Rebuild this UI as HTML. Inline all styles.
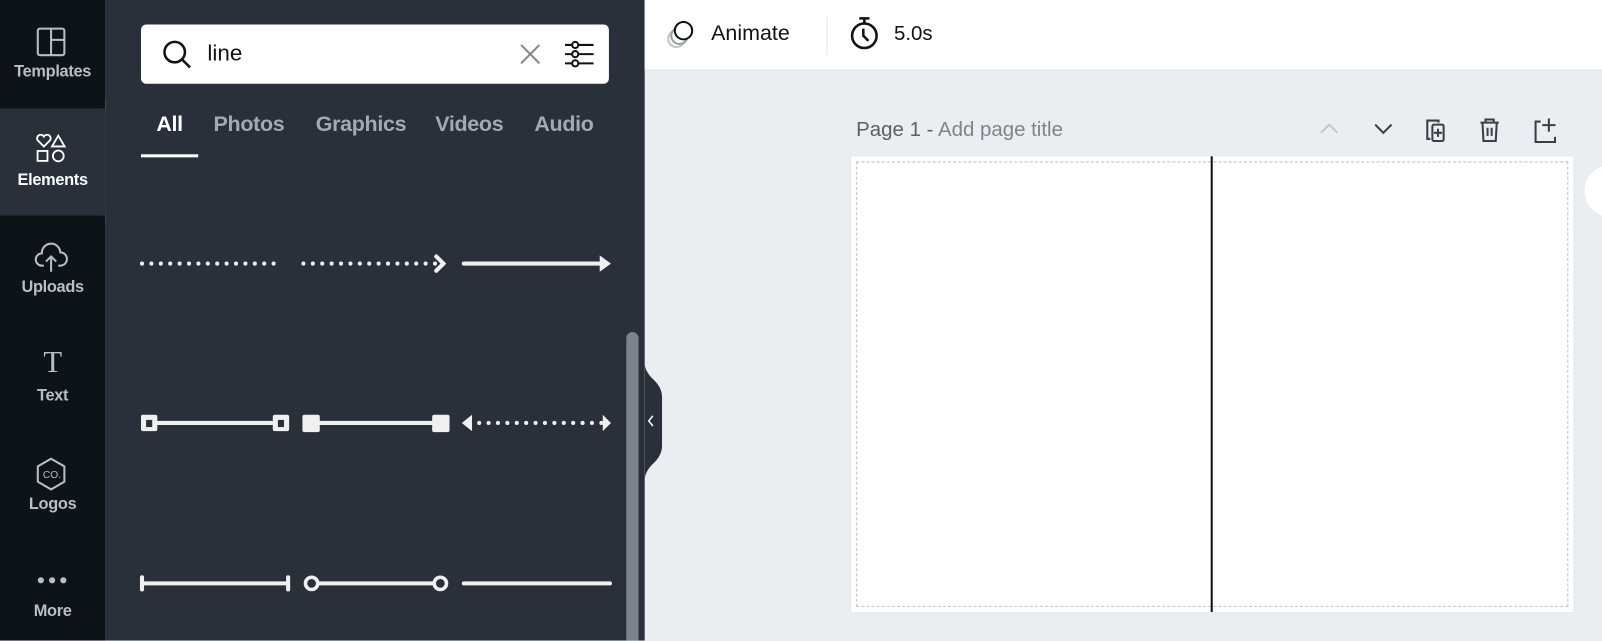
<!DOCTYPE html>
<html><head><meta charset="utf-8"><style>
*{margin:0;padding:0;box-sizing:border-box}
html,body{width:1602px;height:641px;overflow:hidden;background:#ebeef1;font-family:"Liberation Sans",sans-serif}
#w{position:absolute;left:0;top:0;width:1568px;height:627px;overflow:hidden;transform:scale(1.02168);transform-origin:0 0;background:#ebeef1}
.a{position:absolute}
.side{left:0;top:0;width:103px;height:627px;background:#0e1318}
.item{position:absolute;left:0;width:103px;text-align:center;color:#b9bec6;font-size:16px;font-weight:bold;letter-spacing:-0.3px}
.panel{left:103px;top:0;width:528px;height:627px;background:#293039}
.tab{position:absolute;top:110px;font-size:21px;font-weight:bold;color:#a4a9b1;letter-spacing:-0.3px}
</style></head><body><div id="w">
<div class="a side"></div>
<div class="a panel"></div>
<div class="a" style="left:0;top:106px;width:103px;height:105px;background:#293039"></div>
<div class="a" style="left:0;top:0;width:103px;height:106px;background:#0e1318;border-bottom-right-radius:10px"></div>
<div class="a" style="left:0;top:211px;width:103px;height:416px;background:#0e1318;border-top-right-radius:10px"></div>

<svg class="a" style="left:35px;top:26px" width="30" height="30" viewBox="0 0 30 30" fill="none" stroke="#b9bec6" stroke-width="2"><rect x="2" y="2" width="26" height="26" rx="2"/><path d="M15 2v26M15 13h13"/></svg>
<div class="item" style="top:62px">Templates</div>
<svg class="a" style="left:34px;top:131px" width="32" height="30" viewBox="0 0 36 34" fill="none" stroke="#fff" stroke-width="2"><path d="M10 14 L3 7 A3.5 3.5 0 0 1 10 3 A3.5 3.5 0 0 1 17 7Z"/><path d="M26 2 L33 14 H19Z"/><rect x="3" y="19" width="11" height="11"/><circle cx="26" cy="24.5" r="6"/></svg>
<div class="item" style="top:168px;color:#fff">Elements</div>
<svg class="a" style="left:33px;top:236px" width="34" height="32" viewBox="0 0 34 32" fill="none" stroke="#b9bec6" stroke-width="2"><path d="M10 24 H8 A6 6 0 0 1 8 12 A9 9 0 0 1 26 11 A6.5 6.5 0 0 1 26 24 H24"/><path d="M17 30V16M12 20l5-5 5 5"/></svg>
<div class="item" style="top:273px">Uploads</div>
<div class="item" style="top:338px;font-size:30px;font-weight:normal;font-family:'Liberation Serif',serif">T</div>
<div class="item" style="top:379px">Text</div>
<svg class="a" style="left:34px;top:447px" width="32" height="34" viewBox="0 0 32 34" fill="none" stroke="#b9bec6" stroke-width="2"><path d="M16 2 L29 9.5 V24.5 L16 32 L3 24.5 V9.5Z"/><text x="8" y="21" font-size="10" fill="#b9bec6" stroke="none" font-family="Liberation Sans">CO.</text></svg>
<div class="item" style="top:485px">Logos</div>
<svg class="a" style="left:36px;top:564px" width="30" height="8" viewBox="0 0 30 8" fill="#b9bec6"><circle cx="4" cy="4" r="3"/><circle cx="15" cy="4" r="3"/><circle cx="26" cy="4" r="3"/></svg>
<div class="item" style="top:590px">More</div>

<div class="a" style="left:138px;top:24px;width:458px;height:58px;background:#fff;border-radius:5px"></div>
<svg class="a" style="left:158px;top:38px" width="32" height="32" viewBox="0 0 32 32" fill="none" stroke="#0e1318" stroke-width="2.5"><circle cx="13" cy="13" r="10"/><path d="M20.5 20.5 L28 28"/></svg>
<div class="a" style="left:203px;top:39px;font-size:22px;color:#0e1318">line</div>
<svg class="a" style="left:508px;top:42px" width="22" height="22" viewBox="0 0 22 22" stroke="#888" stroke-width="2"><path d="M2 2L20 20M20 2L2 20"/></svg>
<svg class="a" style="left:551px;top:38px" width="32" height="32" viewBox="0 0 32 32" fill="#fff" stroke="#0e1318" stroke-width="2"><path d="M2 6h28M2 15h28M2 24h28"/><circle cx="12" cy="6" r="3"/><circle cx="12" cy="15" r="3"/><circle cx="12" cy="24" r="3"/></svg>
<div class="tab" style="left:153px;color:#fff">All</div>
<div class="tab" style="left:209px">Photos</div>
<div class="tab" style="left:309px">Graphics</div>
<div class="tab" style="left:426px">Videos</div>
<div class="tab" style="left:523px">Audio</div>
<div class="a" style="left:138px;top:151px;width:56px;height:3px;background:#fff"></div>

<svg class="a" style="left:130px;top:240px" width="480" height="350" viewBox="0 0 480 350">
<g stroke="#f0f0f0" stroke-linecap="round" fill="none">
<path d="M9 18 H143" stroke-width="4" stroke-dasharray="0 9.2"/>
<path d="M167 18 H300" stroke-width="4" stroke-dasharray="0 9.2"/>
<path d="M297 11 L304 18 L297 25" stroke-width="4"/>
<path d="M324 18 H460" stroke-width="4"/>
<path d="M23 174 H136M183 174 H294" stroke-width="4"/>
<path d="M339 174 H460" stroke-width="4" stroke-dasharray="0 9.2"/>
<path d="M10 331 H152M9 325V337M152 325V337" stroke-width="4"/>
<path d="M183 331 H295M324 331 H467" stroke-width="4"/>
</g>
<g fill="#f0f0f0"><path d="M457 10 L468 18 L457 26Z"/><path d="M460 166 L468 174 L460 182Z"/><path d="M332 166 L322 174 L332 182Z"/>
<rect x="8" y="166" width="16" height="16" rx="2"/><rect x="137" y="166" width="16" height="16" rx="2"/>
<rect x="166" y="166" width="17" height="17" rx="2"/><rect x="293" y="166" width="17" height="17" rx="2"/></g>
<g fill="#293039"><rect x="13" y="171" width="6" height="7"/><rect x="142" y="171" width="6" height="7"/></g>
<g fill="#293039" stroke="#f0f0f0" stroke-width="3.5"><circle cx="175" cy="331" r="6"/><circle cx="301" cy="331" r="6"/></g>
</svg>

<div class="a" style="left:613px;top:325px;width:12px;height:320px;background:#7d838c;border-radius:6px"></div>
<svg class="a" style="left:631px;top:355px" width="20" height="115" viewBox="0 0 20 115"><path d="M0 0 Q0 8 8 16 Q17 24 17 34 V81 Q17 91 8 99 Q0 107 0 115Z" fill="#293039"/><path d="M8 52 L4 57 L8 62" stroke="#fff" stroke-width="1.5" fill="none"/></svg>

<div class="a" style="left:631px;top:0;width:937px;height:69px;background:#fff;border-bottom:1px solid #dde1e5"></div>
<svg class="a" style="left:651px;top:19px" width="32" height="32" viewBox="0 0 32 32" fill="none"><circle cx="11" cy="19" r="8" stroke="#c0c3c7" stroke-width="2"/><circle cx="14" cy="16" r="8" stroke="#9a9ea3" stroke-width="2" fill="#fff"/><circle cx="18" cy="11" r="8.5" stroke="#0e1318" stroke-width="2" fill="#fff"/></svg>
<div class="a" style="left:696px;top:21px;font-size:21px;color:#0e1318">Animate</div>
<div class="a" style="left:809px;top:16px;width:1px;height:38px;background:#e3e5e8"></div>
<svg class="a" style="left:831px;top:16px" width="30" height="34" viewBox="0 0 30 34" fill="none" stroke="#0e1318" stroke-width="2.5"><path d="M10 2h10M15 2v5"/><circle cx="15" cy="19" r="12"/><path d="M14 12 V19 L19 24"/></svg>
<div class="a" style="left:875px;top:22px;font-size:20px;color:#0e1318">5.0s</div>

<div class="a" style="left:838px;top:116px;font-size:20px;color:#5c6066">Page 1 - <span style="color:#7f848a">Add page title</span></div>
<svg class="a" style="left:1290px;top:114px" width="240" height="28" viewBox="0 0 240 28" fill="none" stroke-width="2"><path d="M3 16 L11 8 L19 16" stroke="#c3c7cc"/><path d="M56 8 L64 16 L72 8" stroke="#3a3f45"/>
<g stroke="#3a3f45"><path d="M110 22 H107 V4 H118 V6"/><rect x="112" y="8" width="11" height="16" rx="1.5"/><path d="M117.5 12v8M113.5 16h8"/>
<path d="M159 6 H177M164 6 V3 H172 V6M161 6 L162 24 H174 L175 6M166 11v8M170 11v8"/>
<path d="M218 5 H213 V25 H232 V20M226 2v13M219.5 8.5h13"/></g></svg>

<div class="a" style="left:833px;top:153px;width:707px;height:446px;background:#fff;box-shadow:0 0 2px rgba(0,0,0,.08)"></div>
<div class="a" style="left:838px;top:158px;width:697px;height:436px;border:1px dashed #bfc3c7"></div>
<div class="a" style="left:1185px;top:153px;width:2px;height:446px;background:#111"></div>
<div class="a" style="left:1551px;top:162px;width:48px;height:50px;border-radius:50%;background:#fff"></div>
</div></body></html>
